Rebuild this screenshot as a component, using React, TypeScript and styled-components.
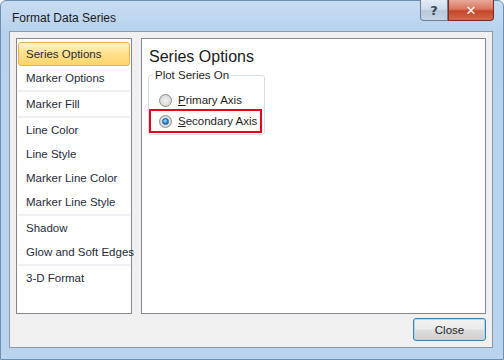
import React from "react";
import styled, { createGlobalStyle } from "styled-components";

const Global = createGlobalStyle`
  html, body { margin: 0; padding: 0; width: 504px; height: 360px; overflow: hidden; }
  body { font-family: "Liberation Sans", Arial, sans-serif; font-size: 11px; color: #1e1e1e; white-space: nowrap; }
`;

const Frame = styled.div`
  width: 504px;
  height: 360px;
  box-sizing: border-box;
  background: linear-gradient(180deg, #c6dcf1 0%, #b9d3ee 30px, #bad4ef 100%);
  border: 1px solid #6d8fb3;
  border-radius: 6px 6px 0 0;
  display: flex;
  flex-direction: column;
  padding: 0 10px 11px 8px;
`;

const TitleBar = styled.div`
  height: 30px;
  display: flex;
  align-items: flex-start;
  justify-content: space-between;
`;

const Title = styled.div`
  margin-top: 10px;
  padding-left: 3px;
  font-size: 12px;
  color: #1a1a1a;
`;

const CaptionButtons = styled.div`
  display: flex;
  margin-top: -1px;
  margin-right: -1px;
`;

const CapButton = styled.div<{ $close?: boolean }>`
  height: 21px;
  width: ${(p) => (p.$close ? "46px" : "28px")};
  box-sizing: border-box;
  display: flex;
  align-items: center;
  justify-content: center;
  border: 1px solid ${(p) => (p.$close ? "#7a2b22" : "#6f7f93")};
  border-top: none;
  border-radius: ${(p) => (p.$close ? "0 0 4px 0" : "0 0 0 4px")};
  background: ${(p) =>
    p.$close
      ? "linear-gradient(180deg, #e9a99c 0%, #d8765f 45%, #c4462a 55%, #d36a4c 100%)"
      : "linear-gradient(180deg, #e3ecf6 0%, #cfdcea 45%, #b7c8dc 55%, #c7d6e6 100%)"};
  color: ${(p) => (p.$close ? "#ffffff" : "#3a4656")};
  font-family: "DejaVu Sans", sans-serif;
  font-weight: bold;
  font-size: 13px;
`;

const Client = styled.div`
  flex: 1;
  background: #f0f0f0;
  border: 1px solid #8a99ab;
  display: flex;
  flex-direction: column;
  padding: 6px 6px 6px 6px;
  gap: 4px;
`;

const Panels = styled.div`
  flex: 1;
  display: flex;
  gap: 9px;
`;

const List = styled.div`
  width: 116px;
  box-sizing: border-box;
  background: #ffffff;
  border: 1px solid #828790;
  padding: 3px 1px;
  display: flex;
  flex-direction: column;
`;

const Item = styled.div<{ $selected?: boolean }>`
  height: 24px;
  box-sizing: border-box;
  display: flex;
  align-items: center;
  padding-left: 7px;
  font-size: 11.5px;
  border-radius: 3px;
  border: 1px solid ${(p) => (p.$selected ? "#e3b24d" : "transparent")};
  background: ${(p) =>
    p.$selected ? "linear-gradient(180deg, #fff3c2 0%, #ffe08a 50%, #fdd56b 100%)" : "transparent"};
  color: #1e2a3a;
`;

const Sep = styled.div`
  height: 2px;
  background: #eef0f4;
`;

const Content = styled.div`
  flex: 1;
  background: #ffffff;
  border: 1px solid #828790;
  padding: 7px 6px;
  display: flex;
  flex-direction: column;
  align-items: flex-start;
`;

const Heading = styled.div`
  font-size: 16px;
  color: #1a1a1a;
  line-height: 22px;
  margin-left: 1px;
  margin-bottom: 1px;
`;

const Group = styled.fieldset`
  margin: 0;
  padding: 10px 2px 1px 0;
  border: 1px solid #d5dfe5;
  border-radius: 3px;
  width: 117px;
  box-sizing: border-box;
  display: flex;
  flex-direction: column;
`;

const Legend = styled.legend`
  padding: 0 2px;
  margin-left: 4px;
  font-size: 11.5px;
  color: #1e1e1e;
`;

const RadioRow = styled.div<{ $marked?: boolean }>`
  display: flex;
  align-items: center;
  gap: 6px;
  height: ${(p) => (p.$marked ? "24px" : "18px")};
  box-sizing: border-box;
  padding-left: ${(p) => (p.$marked ? "8px" : "10px")};
  border: ${(p) => (p.$marked ? "2px solid #e8001a" : "none")};
  width: ${(p) => (p.$marked ? "113px" : "auto")};
  font-size: 11.5px;
`;

const Radio = styled.span<{ $checked?: boolean }>`
  width: 13px;
  height: 13px;
  flex: none;
  box-sizing: border-box;
  border-radius: 50%;
  border: 1px solid #8e8f8f;
  background: radial-gradient(circle at 50% 50%, #f4f4f4 0%, #dcdcdc 60%, #c4c4c4 100%);
  display: flex;
  align-items: center;
  justify-content: center;
  &::after {
    content: "";
    display: ${(p) => (p.$checked ? "block" : "none")};
    width: 5px;
    height: 5px;
    border-radius: 50%;
    background: radial-gradient(circle at 40% 35%, #a6e0ff 0%, #2a8bd1 55%, #0d4c8a 100%);
    border: 1px solid #1b5a98;
  }
`;

const Access = styled.span`
  text-decoration: underline;
`;

const Footer = styled.div`
  display: flex;
  justify-content: flex-end;
`;

const Button = styled.button`
  width: 73px;
  height: 23px;
  font-family: "Liberation Sans", Arial, sans-serif;
  font-size: 11.5px;
  color: #1e1e1e;
  border: 1px solid #3c7fb1;
  border-radius: 3px;
  background: linear-gradient(180deg, #f2f2f2 0%, #ebebeb 48%, #dddddd 52%, #cfcfcf 100%);
  box-shadow: inset 0 0 0 1px #a9dbf6;
  padding: 0;
`;

const items: { label: string; sepBefore?: boolean }[] = [
  { label: "Series Options" },
  { label: "Marker Options" },
  { label: "Marker Fill", sepBefore: true },
  { label: "Line Color", sepBefore: true },
  { label: "Line Style" },
  { label: "Marker Line Color" },
  { label: "Marker Line Style" },
  { label: "Shadow", sepBefore: true },
  { label: "Glow and Soft Edges" },
  { label: "3-D Format", sepBefore: true },
];

export default function App() {
  return (
    <>
      <Global />
      <Frame>
        <TitleBar>
          <Title>Format Data Series</Title>
          <CaptionButtons>
            <CapButton>?</CapButton>
            <CapButton $close>✕</CapButton>
          </CaptionButtons>
        </TitleBar>
        <Client>
          <Panels>
            <List>
              {items.map((it, i) => (
                <React.Fragment key={it.label}>
                  {it.sepBefore && <Sep />}
                  <Item $selected={i === 0}>{it.label}</Item>
                </React.Fragment>
              ))}
            </List>
            <Content>
              <Heading>Series Options</Heading>
              <Group>
                <Legend>Plot Series On</Legend>
                <RadioRow>
                  <Radio />
                  <span>
                    <Access>P</Access>rimary Axis
                  </span>
                </RadioRow>
                <RadioRow $marked>
                  <Radio $checked />
                  <span>
                    <Access>S</Access>econdary Axis
                  </span>
                </RadioRow>
              </Group>
            </Content>
          </Panels>
          <Footer>
            <Button>Close</Button>
          </Footer>
        </Client>
      </Frame>
    </>
  );
}
